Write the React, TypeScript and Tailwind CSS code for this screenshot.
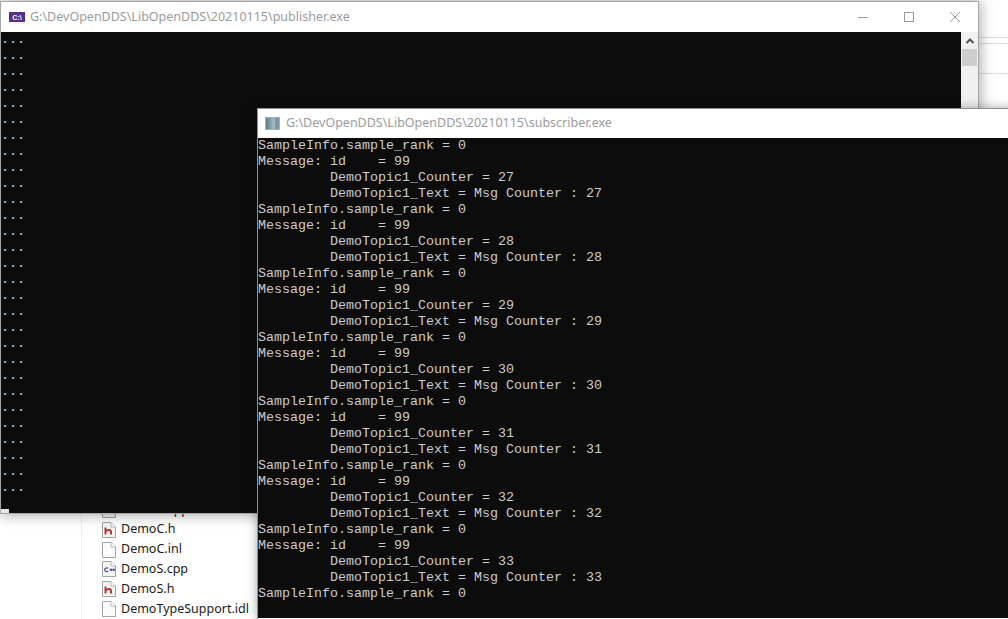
import React from 'react';

const FILES = [
  { name: 'DemoC.cpp', kind: 'cpp' },
  { name: 'DemoC.h', kind: 'h' },
  { name: 'DemoC.inl', kind: 'blank' },
  { name: 'DemoS.cpp', kind: 'cpp' },
  { name: 'DemoS.h', kind: 'h' },
  { name: 'DemoTypeSupport.idl', kind: 'blank' },
];

const COUNTERS = [27, 28, 29, 30, 31, 32, 33];

const FileIcon = ({ kind }: { kind: string }) => (
  <svg width="14" height="16" viewBox="0 0 14 16" className="shrink-0">
    <path d="M0.5 0.5H9L13.5 5V15.5H0.5Z" fill={kind === 'blank' ? '#fbfbfb' : '#f4f5f0'} stroke="#a3a3a3" />
    <path d="M9 0.5V5H13.5" fill="#fff" stroke="#b5b5b5" />
    {kind === 'h' && <path d="M3.5 5.5V12.5M3.5 9.5Q4.5 8 7 8Q9 8 9 10V12.5" fill="none" stroke="#b03a3a" strokeWidth="2" />}
    {kind === 'cpp' && (
      <path d="M6 7.2Q4.6 6.6 3.5 7.2Q2.4 8 2.6 9.2Q3 11 6 10.4M7.6 8.8H10.4M9 7.6V10M10.6 8.8H13M11.8 7.6V10" fill="none" stroke="#3f3fb5" strokeWidth="1.2" />
    )}
  </svg>
);

const WindowControls = () => (
  <div className="ml-auto flex h-full items-center text-[#9a9a9a]">
    <svg width="46" height="30" viewBox="0 0 46 30">
      <path d="M18 15.5H28" stroke="currentColor" />
    </svg>
    <svg width="46" height="30" viewBox="0 0 46 30">
      <rect x="18.5" y="10.5" width="9" height="9" fill="none" stroke="currentColor" />
    </svg>
    <svg width="46" height="30" viewBox="0 0 46 30">
      <path d="M18 10L28 20M28 10L18 20" fill="none" stroke="currentColor" />
    </svg>
  </div>
);

const consoleText = "text-[13.3333px] leading-4 whitespace-pre text-[#cccccc] font-['Liberation_Mono',monospace]";
const titleText = "text-[12.5px] leading-none whitespace-pre text-[#9b9b9b] font-['Noto_Sans',sans-serif]";

export default function App() {
  return (
    <div className="relative h-[619px] w-[1008px] overflow-hidden bg-white">
      {/* explorer behind the consoles */}
      <div className="ml-[81px] flex h-full flex-col border-l border-[#f2f2f2] pl-[20px] pt-[500px]">
        {FILES.map((f) => (
          <div key={f.name} className="flex h-[21px] items-center gap-[5px]">
            <FileIcon kind={f.kind} />
            <span className="text-[12.5px] text-[#1a1a1a] font-['Noto_Sans',sans-serif]">{f.name}</span>
          </div>
        ))}
      </div>

      {/* strips of the window behind, to the right of publisher */}
      <div className="absolute left-[979px] top-[37px] h-px w-[29px] bg-[#dcdcdc]" />
      <div className="absolute left-[979px] top-[43px] h-px w-[29px] bg-[#dcdcdc]" />
      <div className="absolute left-[979px] top-[73px] h-px w-[29px] bg-[#dcdcdc]" />

      {/* publisher */}
      <div className="absolute left-0 top-[1px] flex h-[513px] w-[979px] flex-col border border-[#a6a6a6] bg-white shadow-[0_0_14px_rgba(0,0,0,0.4)]">
        <div className="flex h-[30px] shrink-0 items-center pl-[8px]">
          <div className="flex h-[10px] w-[16px] items-center justify-center bg-[#5a2d8f] text-[7px] font-bold leading-none text-white font-['Liberation_Sans',sans-serif]">
            C:\
          </div>
          <span className={`ml-[5px] ${titleText}`}>G:\DevOpenDDS\LibOpenDDS\20210115\publisher.exe</span>
          <WindowControls />
        </div>
        <div className="flex min-h-0 flex-1">
          <div className="relative flex-1 overflow-hidden bg-[#0c0c0c]">
            <div className={consoleText}>
              {Array.from({ length: 29 }, (_, i) => (
                <div key={i}>...</div>
              ))}
            </div>
            <div className="absolute bottom-0 left-0 h-[4px] w-[8px] bg-[#e6e6e6]" />
          </div>
          <div className="flex w-[17px] flex-col items-center bg-[#f0f0f0]">
            <svg width="16" height="17" viewBox="0 0 16 17">
              <path d="M4.5 11L8 7.5L11.5 11" fill="none" stroke="#555" strokeWidth="2" />
            </svg>
            <div className="h-[17px] w-[15px] bg-[#cdcdcd]" />
          </div>
        </div>
      </div>

      {/* subscriber */}
      <div className="absolute left-[257px] top-[108px] flex h-[511px] w-[760px] flex-col border-l border-t border-[#8f8f8f] bg-white shadow-[0_0_10px_rgba(0,0,0,0.35)]">
        <div className="flex h-[29px] shrink-0 items-center pl-[7px]">
          <div className="flex h-[13px] w-[15px] border border-[#9fb0b8] bg-gradient-to-r from-[#5d7f8c] to-[#d5e3e6]">
            <div className="ml-auto h-full w-[4px] bg-[#7f93a0]" />
          </div>
          <span className={`ml-[6px] ${titleText}`}>G:\DevOpenDDS\LibOpenDDS\20210115\subscriber.exe</span>
        </div>
        <div className={`h-[480px] bg-[#0c0c0c] ${consoleText}`}>
          {COUNTERS.map((n) => (
            <React.Fragment key={n}>
              <div>SampleInfo.sample_rank = 0</div>
              <div>Message: id    = 99</div>
              <div>{`         DemoTopic1_Counter = ${n}`}</div>
              <div>{`         DemoTopic1_Text = Msg Counter : ${n}`}</div>
            </React.Fragment>
          ))}
          <div>SampleInfo.sample_rank = 0</div>
        </div>
      </div>
    </div>
  );
}
